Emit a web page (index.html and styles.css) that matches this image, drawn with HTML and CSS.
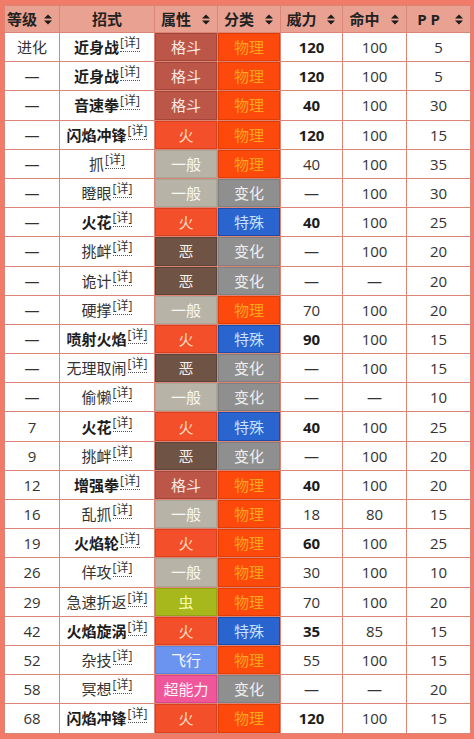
FILE: index.html
```html
<!DOCTYPE html>
<html lang="zh">
<head>
<meta charset="utf-8">
<title>招式表</title>
<link rel="stylesheet" href="styles.css">
</head>
<body>
<div class="frame">
<table class="moves">
<colgroup>
<col class="c-lv"><col class="c-name"><col class="c-type"><col class="c-cat"><col class="c-pow"><col class="c-acc"><col class="c-pp">
</colgroup>
<thead>
<tr>
<th class="sort">等级<svg class="arr" viewBox="0 0 8 11"><path d="M0 4.6L4 0.4L8 4.6Z M0 6.4L8 6.4L4 10.6Z"/></svg></th>
<th>招式</th>
<th class="sort">属性<svg class="arr" viewBox="0 0 8 11"><path d="M0 4.6L4 0.4L8 4.6Z M0 6.4L8 6.4L4 10.6Z"/></svg></th>
<th class="sort">分类<svg class="arr" viewBox="0 0 8 11"><path d="M0 4.6L4 0.4L8 4.6Z M0 6.4L8 6.4L4 10.6Z"/></svg></th>
<th class="sort">威力<svg class="arr" viewBox="0 0 8 11"><path d="M0 4.6L4 0.4L8 4.6Z M0 6.4L8 6.4L4 10.6Z"/></svg></th>
<th class="sort">命中<svg class="arr" viewBox="0 0 8 11"><path d="M0 4.6L4 0.4L8 4.6Z M0 6.4L8 6.4L4 10.6Z"/></svg></th>
<th class="sort pp">P P<svg class="arr" viewBox="0 0 8 11"><path d="M0 4.6L4 0.4L8 4.6Z M0 6.4L8 6.4L4 10.6Z"/></svg></th>
</tr>
</thead>
<tbody>
<tr><td>进化</td><td class="b">近身战<sup>[详]</sup></td><td class="t fighting">格斗</td><td class="t phys">物理</td><td class="b">120</td><td>100</td><td>5</td></tr>
<tr><td>—</td><td class="b">近身战<sup>[详]</sup></td><td class="t fighting">格斗</td><td class="t phys">物理</td><td class="b">120</td><td>100</td><td>5</td></tr>
<tr><td>—</td><td class="b">音速拳<sup>[详]</sup></td><td class="t fighting">格斗</td><td class="t phys">物理</td><td class="b">40</td><td>100</td><td>30</td></tr>
<tr><td>—</td><td class="b">闪焰冲锋<sup>[详]</sup></td><td class="t fire">火</td><td class="t phys">物理</td><td class="b">120</td><td>100</td><td>15</td></tr>
<tr><td>—</td><td>抓<sup>[详]</sup></td><td class="t normal">一般</td><td class="t phys">物理</td><td>40</td><td>100</td><td>35</td></tr>
<tr><td>—</td><td>瞪眼<sup>[详]</sup></td><td class="t normal">一般</td><td class="t status">变化</td><td>—</td><td>100</td><td>30</td></tr>
<tr><td>—</td><td class="b">火花<sup>[详]</sup></td><td class="t fire">火</td><td class="t spec">特殊</td><td class="b">40</td><td>100</td><td>25</td></tr>
<tr><td>—</td><td>挑衅<sup>[详]</sup></td><td class="t dark">恶</td><td class="t status">变化</td><td>—</td><td>100</td><td>20</td></tr>
<tr><td>—</td><td>诡计<sup>[详]</sup></td><td class="t dark">恶</td><td class="t status">变化</td><td>—</td><td>—</td><td>20</td></tr>
<tr><td>—</td><td>硬撑<sup>[详]</sup></td><td class="t normal">一般</td><td class="t phys">物理</td><td>70</td><td>100</td><td>20</td></tr>
<tr><td>—</td><td class="b">喷射火焰<sup>[详]</sup></td><td class="t fire">火</td><td class="t spec">特殊</td><td class="b">90</td><td>100</td><td>15</td></tr>
<tr><td>—</td><td>无理取闹<sup>[详]</sup></td><td class="t dark">恶</td><td class="t status">变化</td><td>—</td><td>100</td><td>15</td></tr>
<tr><td>—</td><td>偷懒<sup>[详]</sup></td><td class="t normal">一般</td><td class="t status">变化</td><td>—</td><td>—</td><td>10</td></tr>
<tr><td>7</td><td class="b">火花<sup>[详]</sup></td><td class="t fire">火</td><td class="t spec">特殊</td><td class="b">40</td><td>100</td><td>25</td></tr>
<tr><td>9</td><td>挑衅<sup>[详]</sup></td><td class="t dark">恶</td><td class="t status">变化</td><td>—</td><td>100</td><td>20</td></tr>
<tr><td>12</td><td class="b">增强拳<sup>[详]</sup></td><td class="t fighting">格斗</td><td class="t phys">物理</td><td class="b">40</td><td>100</td><td>20</td></tr>
<tr><td>16</td><td>乱抓<sup>[详]</sup></td><td class="t normal">一般</td><td class="t phys">物理</td><td>18</td><td>80</td><td>15</td></tr>
<tr><td>19</td><td class="b">火焰轮<sup>[详]</sup></td><td class="t fire">火</td><td class="t phys">物理</td><td class="b">60</td><td>100</td><td>25</td></tr>
<tr><td>26</td><td>佯攻<sup>[详]</sup></td><td class="t normal">一般</td><td class="t phys">物理</td><td>30</td><td>100</td><td>10</td></tr>
<tr><td>29</td><td>急速折返<sup>[详]</sup></td><td class="t bug">虫</td><td class="t phys">物理</td><td>70</td><td>100</td><td>20</td></tr>
<tr><td>42</td><td class="b">火焰旋涡<sup>[详]</sup></td><td class="t fire">火</td><td class="t spec">特殊</td><td class="b">35</td><td>85</td><td>15</td></tr>
<tr><td>52</td><td>杂技<sup>[详]</sup></td><td class="t flying">飞行</td><td class="t phys">物理</td><td>55</td><td>100</td><td>15</td></tr>
<tr><td>58</td><td>冥想<sup>[详]</sup></td><td class="t psychic">超能力</td><td class="t status">变化</td><td>—</td><td>—</td><td>20</td></tr>
<tr><td>68</td><td class="b">闪焰冲锋<sup>[详]</sup></td><td class="t fire">火</td><td class="t phys">物理</td><td class="b">120</td><td>100</td><td>15</td></tr>
</tbody>
</table>
</div>
</body>
</html>
```

FILE: styles.css
```css
html, body {
  margin: 0;
  padding: 0;
  background: #ffffff;
}

.frame {
  background: #f07b68;
  padding: 5px 4px 8px 4px;
  width: 466px;
}

.moves {
  width: 466px;
  table-layout: fixed;
  border-collapse: collapse;
  font-family: "Open Sans", "Noto Sans CJK SC", sans-serif;
  font-size: 15px;
  color: #333;
  background: #ffffff;
}

.c-lv { width: 55px; }
.c-name { width: 95px; }
.c-type { width: 63px; }
.c-cat { width: 63px; }
.c-pow { width: 62px; }
.c-acc { width: 64px; }
.c-pp { width: 64px; }

.moves th,
.moves td {
  border: 1px solid #dc8577;
  padding: 0;
  text-align: center;
  vertical-align: middle;
  white-space: nowrap;
  line-height: 20px;
}

.moves th {
  height: 26px;
  background: #e9a292;
  color: #222;
  font-weight: bold;
  font-family: "Noto Sans CJK SC", "Open Sans", sans-serif;
  position: relative;
}

.moves th.sort {
  padding-right: 21px;
  padding-left: 1px;
}

.moves th .arr {
  position: absolute;
  right: 7px;
  top: 8px;
  width: 8px;
  height: 11px;
  fill: #1a1a1a;
}

.moves th.pp {
  font-family: "Open Sans", sans-serif;
}

.moves tbody tr {
  height: 29.2px;
}

.moves td {
  font-family: "Open Sans", "Noto Sans CJK SC", sans-serif;
}

.moves td.b {
  font-weight: bold;
  color: #1c1c1c;
}

.moves sup {
  font-size: 12px;
  font-weight: normal;
  line-height: 1;
  vertical-align: 6px;
  border-bottom: 1px dotted #555;
  color: #333;
  margin-left: 1px;
}

.moves td.t {
  font-family: "Noto Sans CJK SC", sans-serif;
  font-weight: normal;
}

.fighting { background: #bb5648; color: #fbe9e4; box-shadow: inset 0 0 0 1px #a4453a; }
.fire { background: #f24f2a; color: #ffdcc0; box-shadow: inset 0 0 0 1px #d8401e; }
.normal { background: #b7b4a7; color: #f7f7f4; box-shadow: inset 0 0 0 1px #a9a699; }
.dark { background: #6f5445; color: #f7f0ea; box-shadow: inset 0 0 0 1px #5c4337; }
.bug { background: #a6b81c; color: #fdfbb0; box-shadow: inset 0 0 0 1px #93a412; }
.flying { background: #6b94f0; color: #f6f8ff; box-shadow: inset 0 0 0 1px #5a82dc; }
.psychic { background: #f0579b; color: #fff2f8; box-shadow: inset 0 0 0 1px #d8458a; }

.phys { background: #fd4a0c; color: #ffa51c; box-shadow: inset 0 0 0 1px #e03c04; }
.spec { background: #2a65cf; color: #c4e2ff; box-shadow: inset 0 0 0 1px #1b4ca8; }
.status { background: #8f8f8f; color: #efefef; box-shadow: inset 0 0 0 1px #7f7f7f; }
```
